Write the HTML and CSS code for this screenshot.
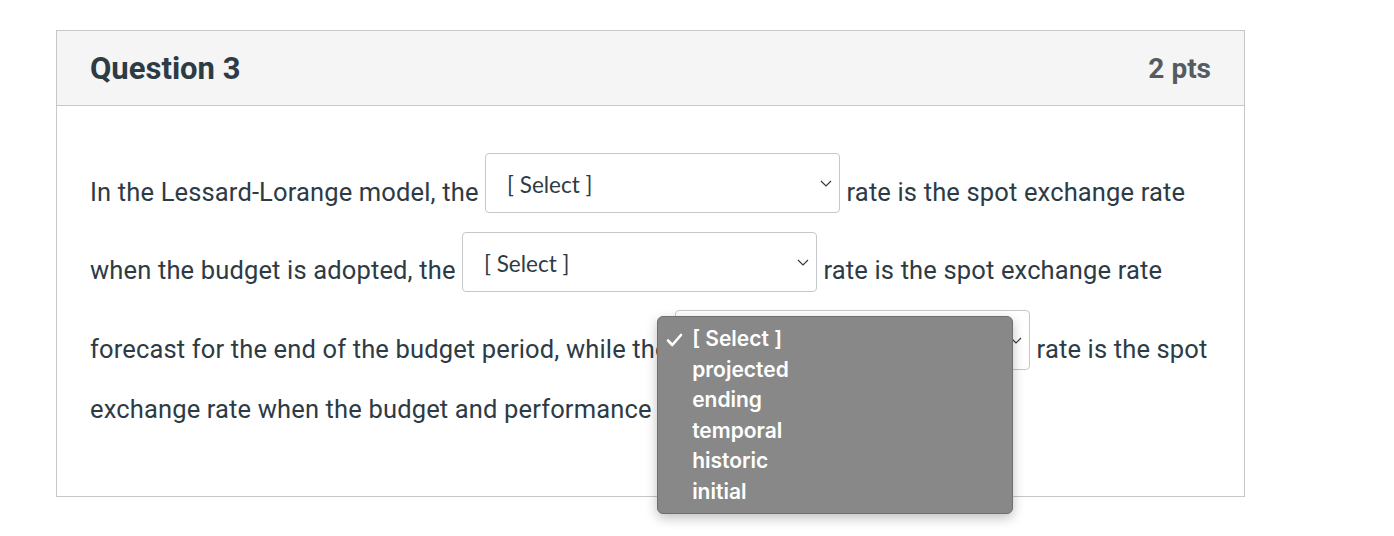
FILE: index.html
```html
<!DOCTYPE html>
<html>
<head>
<meta charset="utf-8">
<link rel="stylesheet" href="styles.css">
</head>
<body>
<div class="card">
  <div class="card-header">
    <h2 class="q-title">Question 3</h2>
    <span class="q-pts">2 pts</span>
  </div>
  <div class="card-body">
    <p class="q-text">In the Lessard-Lorange model, the <span class="sel"><span class="sel-label">[ Select ]</span><svg class="chev" width="12" height="7" viewBox="0 0 12 7"><path d="M1 1 L6 6 L11 1" fill="none" stroke="#2d3b45" stroke-width="1.2"/></svg></span> rate is the spot exchange rate when the budget is adopted, the <span class="sel"><span class="sel-label">[ Select ]</span><svg class="chev" width="12" height="7" viewBox="0 0 12 7"><path d="M1 1 L6 6 L11 1" fill="none" stroke="#2d3b45" stroke-width="1.2"/></svg></span> rate is the spot exchange rate forecast for the end of the budget period, while the <span class="sel sel-open"><span class="sel-label">[ Select ]</span><svg class="chev" width="12" height="7" viewBox="0 0 12 7"><path d="M1 1 L6 6 L11 1" fill="none" stroke="#2d3b45" stroke-width="1.2"/></svg><span class="menu"><span class="opt opt-checked"><svg class="check" width="17" height="14" viewBox="0 0 17 14"><path d="M2 7.5 L6.3 12 L15 2" fill="none" stroke="#ffffff" stroke-width="2.6" stroke-linecap="round" stroke-linejoin="round"/></svg>[ Select ]</span><span class="opt">projected</span><span class="opt">ending</span><span class="opt">temporal</span><span class="opt">historic</span><span class="opt">initial</span></span></span> rate is the spot exchange rate when the budget and performance report is evaluated.</p>
  </div>
</div>
</body>
</html>
```

FILE: styles.css
```css
html, body {
  margin: 0;
  padding: 0;
  background: #ffffff;
}

body {
  padding: 30px 0 60px 56px;
}

.card {
  width: 1189px;
  box-sizing: border-box;
  border: 1px solid #c4c8cb;
  font-family: Roboto, "Liberation Sans", sans-serif;
  color: #2d3b45;
}

.card-header {
  height: 74px;
  background: #f5f5f5;
  border-bottom: 1px solid #c4c8cb;
  display: flex;
  align-items: center;
  justify-content: space-between;
  padding: 0 33px;
}

.q-title {
  margin: 0;
  font-size: 31px;
  font-weight: 700;
  color: #2d3b45;
}

.q-pts {
  font-size: 28px;
  font-weight: 700;
  color: #555b60;
}

.card-body {
  padding: 37.5px 33px 56px;
}

.q-text {
  margin: 0;
  font-size: 25.5px;
  letter-spacing: 0.15px;
  line-height: 61px;
}

.sel {
  display: inline-block;
  position: relative;
  box-sizing: border-box;
  width: 355px;
  height: 60px;
  margin-top: 9.5px;
  vertical-align: 7px;
  border: 1px solid #c4c8cb;
  border-radius: 4px;
  background: #ffffff;
  padding: 2px 0 0 21px;
  font-family: Lato, "Liberation Sans", sans-serif;
  font-size: 22.5px;
  letter-spacing: 0;
  line-height: 58px;
  color: #2d3b45;
}

.chev {
  position: absolute;
  right: 7px;
  top: 26px;
}

.menu {
  position: absolute;
  left: -19px;
  top: 5px;
  width: 356px;
  height: 198px;
  box-sizing: border-box;
  padding: 7px 0 0 34px;
  background: #888888;
  border: 1px solid #6f6f6f;
  border-radius: 6px;
  box-shadow: 0 4px 12px rgba(0, 0, 0, 0.25);
  display: flex;
  flex-direction: column;
  z-index: 5;
}

.opt {
  display: block;
  position: relative;
  font-family: Inter, "Liberation Sans", sans-serif;
  font-size: 21px;
  font-weight: 600;
  line-height: 30.5px;
  color: #ffffff;
}

.check {
  position: absolute;
  left: -26px;
  top: 9px;
}
```
